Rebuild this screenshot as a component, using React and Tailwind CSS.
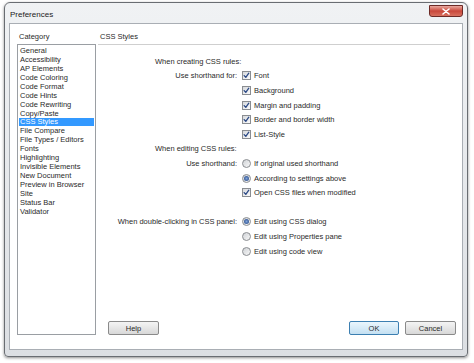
import React from "react";

function Check() {
  return (
    <span className="w-[9px] h-[9px] shrink-0 border border-[#8a8d91] bg-linear-to-br from-[#d6d8db] to-[#fbfbfb] flex items-center justify-center">
      <svg width="7" height="7" viewBox="0 0 7 7">
        <path d="M1.2 3.6 L2.8 5.4 L5.8 1.2" stroke="#2c4a86" strokeWidth="1.3" fill="none" strokeLinecap="round" strokeLinejoin="round" />
      </svg>
    </span>
  );
}

function Radio({ on }) {
  return (
    <span className="w-[9px] h-[9px] shrink-0 rounded-full border border-[#8a8d91] bg-linear-to-br from-[#cfd2d6] to-[#f8f8f8] flex items-center justify-center">
      {on && <span className="w-[5px] h-[5px] rounded-full bg-radial from-[#7fa2d8] to-[#1d3f7e]" />}
    </span>
  );
}

function Row({ label, children }) {
  return (
    <div className="h-[14.6px] flex items-center">
      <div className="w-[140px] text-right pr-[1px]">{label}</div>
      <div className="ml-[4px] flex items-center gap-[3px]">{children}</div>
    </div>
  );
}

const items = [
  "General",
  "Accessibility",
  "AP Elements",
  "Code Coloring",
  "Code Format",
  "Code Hints",
  "Code Rewriting",
  "Copy/Paste",
  "CSS Styles",
  "File Compare",
  "File Types / Editors",
  "Fonts",
  "Highlighting",
  "Invisible Elements",
  "New Document",
  "Preview in Browser",
  "Site",
  "Status Bar",
  "Validator",
];

function Btn({ children, primary, w }) {
  return (
    <div
      className={
        "h-[14px] rounded-[2px] flex items-center justify-center bg-linear-to-b " +
        (primary
          ? "border border-[#3c7fb1] from-[#eaf6fd] to-[#c4e0f2] "
          : "border border-[#8a8a8a] from-[#f4f4f4] to-[#d8d8d8] ") +
        w
      }
    >
      {children}
    </div>
  );
}

export default function App() {
  return (
    <div className="w-[474px] h-[363px] bg-white pt-[2px] pl-[4px] overflow-hidden font-['Liberation_Sans',Arial,sans-serif] text-[7.5px] leading-[9px] text-[#2a2a2a]">
      <div className="w-[464px] h-[355px] rounded-t-[6px] rounded-b-[4px] border border-[#696d72] bg-linear-to-b from-[#f0f2f4] to-[#dcdfe3] flex flex-col shadow-[0_1px_3px_rgba(0,0,0,0.45)]">
        <div className="h-[20px] flex items-start justify-between">
          <div className="pl-[5px] pt-[7px] text-[8px] leading-[9px] text-[#222]">Preferences</div>
          <div className="mt-[2px] mr-[4px] w-[34px] h-[12px] rounded-b-[3px] border border-[#6d2a26] bg-linear-to-b from-[#e8a89f] via-[#c9473b] to-[#d8705f] flex items-center justify-center">
            <svg width="8" height="7" viewBox="0 0 8 7">
              <path d="M1 1 L7 6 M7 1 L1 6" stroke="#fff" strokeWidth="1.6" strokeLinecap="round" />
            </svg>
          </div>
        </div>
        <div className="mx-[4px] h-[327px] border border-[#a9aeb4] bg-white flex pl-[7px] pr-[6px] pb-[14px]">
          <div className="w-[79px] flex flex-col">
            <div className="h-[20px] flex items-end pb-[3px] pl-[2px]">Category</div>
            <div className="flex-1 border border-[#9a9ea3] pt-[1px] px-[1px]">
              {items.map((it) => (
                <div
                  key={it}
                  className={
                    "h-[8.94px] flex items-center pl-[1px] whitespace-nowrap " +
                    (it === "CSS Styles" ? "bg-[#3399ff] text-white" : "")
                  }
                >
                  {it}
                </div>
              ))}
            </div>
          </div>
          <div className="ml-[2px] flex-1 flex flex-col">
            <div className="h-[20px] flex items-end pb-[3px] pl-[2px]">CSS Styles</div>
            <div className="mr-[6px] h-[2px] border-t border-[#cfcfcf] border-b border-b-white" />
            <div className="pt-[8px]">
              <div className="h-[14.6px] flex items-center pl-[57px]">When creating CSS rules:</div>
              <Row label="Use shorthand for:"><Check /><span>Font</span></Row>
              <Row label=""><Check /><span>Background</span></Row>
              <Row label=""><Check /><span>Margin and padding</span></Row>
              <Row label=""><Check /><span>Border and border width</span></Row>
              <Row label=""><Check /><span>List-Style</span></Row>
              <div className="h-[14.6px] flex items-center pl-[57px]">When editing CSS rules:</div>
              <Row label="Use shorthand:"><Radio /><span>If original used shorthand</span></Row>
              <Row label=""><Radio on /><span>According to settings above</span></Row>
              <Row label=""><Check /><span>Open CSS files when modified</span></Row>
              <div className="h-[14.6px]" />
              <Row label="When double-clicking in CSS panel:"><Radio on /><span>Edit using CSS dialog</span></Row>
              <Row label=""><Radio /><span>Edit using Properties pane</span></Row>
              <Row label=""><Radio /><span>Edit using code view</span></Row>
            </div>
            <div className="mt-auto flex items-end">
              <div className="ml-[10px]"><Btn w="w-[51px]">Help</Btn></div>
              <div className="ml-auto flex gap-[6px]">
                <Btn primary w="w-[50px]">OK</Btn>
                <Btn w="w-[51px]">Cancel</Btn>
              </div>
            </div>
          </div>
        </div>
      </div>
    </div>
  );
}
